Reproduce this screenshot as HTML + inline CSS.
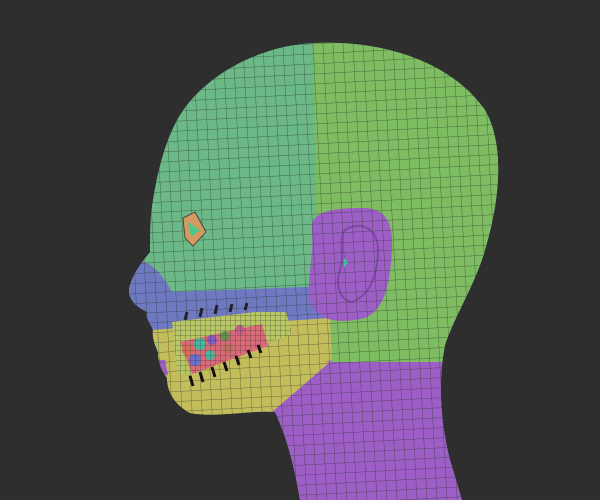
<!DOCTYPE html>
<html><head><style>html,body{margin:0;padding:0;background:#2e2e2e;}svg{display:block}</style></head>
<body>
<svg width="600" height="500" viewBox="0 0 600 500" xmlns="http://www.w3.org/2000/svg">
<defs>
<pattern id="g" width="10" height="10" patternUnits="userSpaceOnUse" patternTransform="rotate(-3)">
<path d="M0 0H10M0 0V10" stroke="#1e2a1e" stroke-opacity="0.55" stroke-width="1" fill="none"/>
</pattern>
<pattern id="gf" width="5" height="5" patternUnits="userSpaceOnUse">
<path d="M0 0H5M0 0V5" stroke="#222" stroke-opacity="0.6" stroke-width="0.8" fill="none"/>
</pattern>
<clipPath id="head">
<path d="M315 43 C380 40 450 60 485 110 C505 145 500 200 485 250 C475 285 455 315 445 345 C438 380 440 420 450 460 L462 500 L300 500 C295 470 288 440 275 412 C250 410 215 418 190 413 C175 405 167 392 167 378 C160 368 158 360 158 352 C155 345 152 338 153 330 C150 322 145 318 147 312 C135 306 126 298 130 285 C134 272 142 262 150 252 C150 235 150 215 153 200 C158 170 165 140 180 115 C205 75 260 45 315 43 Z"/>
</clipPath>
</defs>
<g clip-path="url(#head)">
<rect x="0" y="0" width="600" height="500" fill="#6cb886"/>
<path d="M312 0 L600 0 L600 365 L312 365 L318 300 Z" fill="#7fbd63"/>
<path d="M100 262 L145 262 C158 268 165 280 172 292 L330 286 L330 322 L160 332 L100 332 Z" fill="#6f79c2"/>
<path d="M150 330 L330 318 L332 360 C310 380 290 395 275 415 L150 430 Z" fill="#c4bd5c"/>
<path d="M325 362 L600 362 L600 500 L290 500 C290 460 282 430 272 412 C295 392 312 378 332 360 Z" fill="#9d5fc6"/>
<path d="M140 340 L162 342 L160 358 L140 358 Z" fill="#b5c367"/>
<path d="M140 360 L165 360 L168 375 L140 375 Z" fill="#9d5fc6"/>
<path d="M312 230 C310 212 330 208 362 208 C388 208 393 225 392 250 C390 285 384 310 365 318 C340 324 316 322 310 300 C306 280 314 260 312 230 Z" fill="#9d5fc6"/>
<rect x="0" y="0" width="600" height="500" fill="url(#g)"/>
<path d="M345 230 C360 220 378 228 378 250 C378 275 370 295 352 302 C340 300 335 285 340 270 C345 255 338 240 345 230 Z" fill="none" stroke="#5a3478" stroke-width="2" opacity="0.5"/>
<path d="M344 258 L348 262 L344 268 Z" fill="#3fbf9a"/>
<path d="M183 218 L195 212 L206 232 L193 246 L185 238 Z" fill="#d59a62" stroke="#333" stroke-width="0.8"/>
<path d="M188 222 L200 230 L191 237 Z" fill="#4fc88c"/>
<path d="M172 322 L255 312 L286 312 L292 334 L262 345 L245 352 L190 376 L177 372 Z" fill="#b9c766"/>
<path d="M180 342 L262 324 L268 346 L192 374 Z" fill="#d96a78"/>
<circle cx="188" cy="350" r="6" fill="#d6705a"/><circle cx="200" cy="344" r="6" fill="#47b8a0"/>
<circle cx="212" cy="340" r="5" fill="#8a5ac0"/><circle cx="225" cy="336" r="5" fill="#6a9050"/>
<circle cx="240" cy="330" r="5" fill="#c0608a"/><circle cx="195" cy="360" r="6" fill="#6a70c8"/>
<circle cx="210" cy="355" r="5" fill="#47b8a0"/><circle cx="228" cy="348" r="5" fill="#c07060"/>
<path d="M172 322 L255 312 L286 312 L292 334 L262 345 L245 352 L190 376 L177 372 Z" fill="url(#gf)"/>
<path d="M190 376 l3 10 M200 372 l3 10 M212 367 l3 10 M224 362 l3 9 M236 356 l3 9 M248 350 l3 8 M258 345 l3 8" stroke="#111" stroke-width="3"/>
<path d="M185 320 l2 -8 M200 317 l2 -9 M215 314 l2 -9 M230 312 l2 -8 M245 310 l2 -7" stroke="#222" stroke-width="3"/>
</g>
</svg>
</body></html>
